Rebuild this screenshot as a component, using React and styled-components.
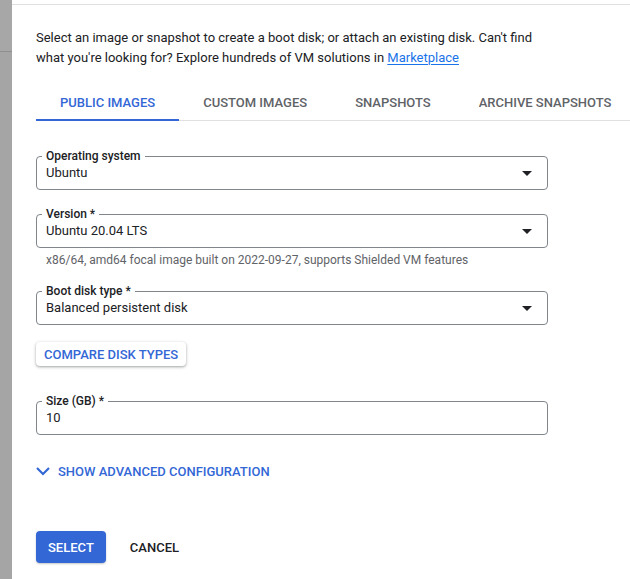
import React from "react";
import styled, { createGlobalStyle } from "styled-components";

const Global = createGlobalStyle`
  html, body { margin: 0; padding: 0; background: #fff; }
  body { font-family: Roboto, "Noto Sans", Arial, sans-serif; color: #202124; -webkit-font-smoothing: antialiased; }
  * { box-sizing: border-box; }
`;

const Page = styled.div`
  display: flex;
  width: 630px;
  height: 579px;
  overflow: hidden;
`;

const Strip = styled.div`
  width: 12px;
  flex: none;
  background: #a5a5a5;
  display: flex;
  flex-direction: column;
`;

const StripTop = styled.div`
  height: 52px;
  border-bottom: 1px solid #8f8f8f;
  background: #a7a7a7;
`;

const Panel = styled.div`
  flex: 1;
  display: flex;
  flex-direction: column;
  min-width: 0;
`;

const TopRule = styled.div`
  height: 5px;
  border-bottom: 1px solid #e0e0e0;
  flex: none;
`;

const Content = styled.div`
  padding: 23px 0 0 24px;
  display: flex;
  flex-direction: column;
`;

const Description = styled.p`
  margin: 0;
  font-size: 13px;
  line-height: 20px;
  color: #202124;
  width: 520px;
`;

const Link = styled.a`
  color: #1a73e8;
  text-decoration: underline;
  text-underline-offset: 2px;
  text-decoration-thickness: 1px;
`;

const Tabs = styled.div`
  display: flex;
  margin-top: 16px;
  border-bottom: 1px solid #e0e0e0;
`;

const Tab = styled.div`
  height: 37px;
  padding: 2px 24px 0;
  display: flex;
  align-items: center;
  font-size: 13px;
  font-weight: 500;
  text-transform: uppercase;
  color: ${(p) => (p.$active ? "#3367d6" : "#5f6368")};
  border-bottom: 2px solid ${(p) => (p.$active ? "#3367d6" : "transparent")};
  margin-bottom: -1px;
  white-space: nowrap;
`;

const Form = styled.div`
  width: 512px;
  display: flex;
  flex-direction: column;
  margin-top: 28px;
`;

const Field = styled.fieldset`
  position: relative;
  margin: ${(p) => p.$mt || 0}px 0 0 0;
  padding: 0 10px 6px 5px;
  border: 1px solid #80868b;
  border-radius: 4px;
  min-width: 0;
`;

const Legend = styled.legend`
  padding: 0 4px;
  font-size: 12px;
  line-height: 14px;
  font-weight: 500;
  color: #202124;
`;

const Value = styled.div`
  padding-left: 4px;
  font-size: 13px;
  line-height: 20px;
  color: #202124;
`;

const Caret = styled.span`
  position: absolute;
  right: 15px;
  top: 8px;
  width: 0;
  height: 0;
  border-left: 5px solid transparent;
  border-right: 5px solid transparent;
  border-top: 5px solid #202124;
`;

const Hint = styled.div`
  margin: 5px 0 0 10px;
  font-size: 12px;
  line-height: 14px;
  color: #5f6368;
`;

const RaisedButton = styled.button`
  align-self: flex-start;
  margin-top: 17px;
  height: 24px;
  padding: 0 8px;
  border: none;
  border-radius: 4px;
  background: #fff;
  box-shadow: 0 1px 2px rgba(60, 64, 67, 0.3), 0 1px 3px 1px rgba(60, 64, 67, 0.15);
  font-family: inherit;
  font-size: 13px;
  font-weight: 500;
  color: #3367d6;
`;

const Toggle = styled.div`
  display: flex;
  align-items: center;
  gap: 3px;
  margin-top: 24px;
  margin-left: -5px;
  font-size: 13px;
  font-weight: 500;
  color: #3367d6;
`;

const Actions = styled.div`
  display: flex;
  align-items: center;
  gap: 8px;
  margin-top: 48px;
`;

const PrimaryButton = styled.button`
  height: 32px;
  padding: 0 12px;
  border: none;
  border-radius: 4px;
  background: #3367d6;
  box-shadow: 0 1px 2px rgba(60, 64, 67, 0.3);
  color: #fff;
  font-family: inherit;
  font-size: 13px;
  font-weight: 500;
`;

const TextButton = styled.button`
  height: 32px;
  padding: 0 16px;
  border: none;
  background: transparent;
  color: #202124;
  font-family: inherit;
  font-size: 13px;
  font-weight: 500;
`;

function Select({ label, value, mt, caret = true }) {
  return (
    <Field $mt={mt}>
      <Legend>{label}</Legend>
      <Value>{value}</Value>
      {caret && <Caret />}
    </Field>
  );
}

export default function App() {
  return (
    <Page>
      <Global />
      <Strip>
        <StripTop />
      </Strip>
      <Panel>
        <TopRule />
        <Content>
          <Description>
            Select an image or snapshot to create a boot disk; or attach an existing disk. Can't find
            what you're looking for? Explore hundreds of VM solutions in <Link>Marketplace</Link>
          </Description>
          <Tabs>
            <Tab $active>Public images</Tab>
            <Tab>Custom images</Tab>
            <Tab>Snapshots</Tab>
            <Tab>Archive snapshots</Tab>
          </Tabs>
          <Form>
            <Select label="Operating system" value="Ubuntu" />
            <Select label="Version *" value="Ubuntu 20.04 LTS" mt={17} />
            <Hint>x86/64, amd64 focal image built on 2022-09-27, supports Shielded VM features</Hint>
            <Select label="Boot disk type *" value="Balanced persistent disk" mt={17} />
            <RaisedButton>COMPARE DISK TYPES</RaisedButton>
            <Select label="Size (GB) *" value="10" mt={28} caret={false} />
            <Toggle>
              <svg width="24" height="24" viewBox="0 0 24 24" fill="none" stroke="#3367d6" strokeWidth="2.2">
                <path d="M6 9l6 6 6-6" />
              </svg>
              SHOW ADVANCED CONFIGURATION
            </Toggle>
            <Actions>
              <PrimaryButton>SELECT</PrimaryButton>
              <TextButton>CANCEL</TextButton>
            </Actions>
          </Form>
        </Content>
      </Panel>
    </Page>
  );
}
